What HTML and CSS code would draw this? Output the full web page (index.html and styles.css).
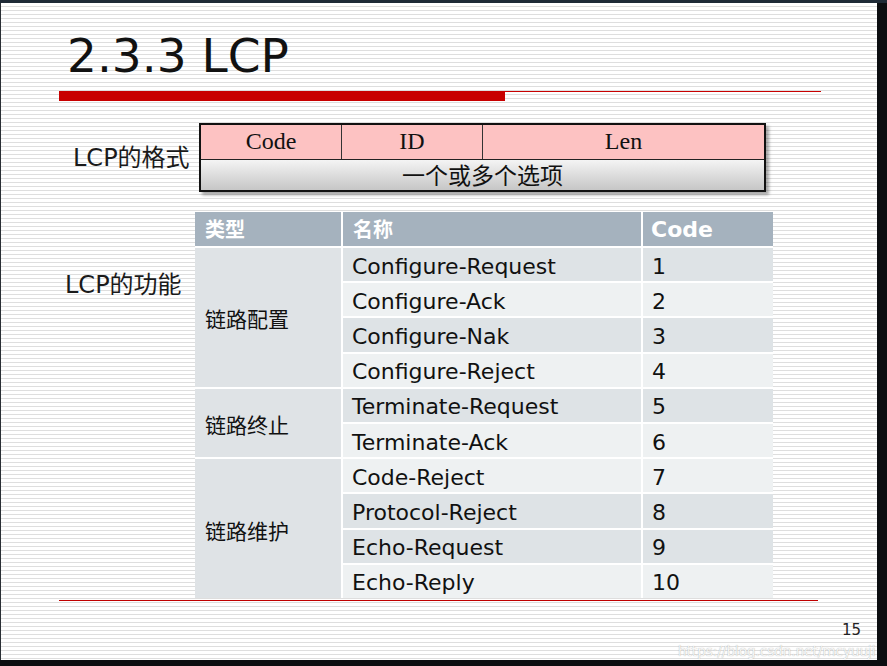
FILE: index.html
```html
<!DOCTYPE html>
<html lang="zh">
<head>
<meta charset="utf-8">
<title>2.3.3 LCP</title>
<link rel="stylesheet" href="styles.css">
</head>
<body>
<div class="topbar"></div>
<div class="frame">
  <div class="edge"></div>
  <div class="slide">
    <h1 class="title">2.3.3 LCP</h1>
    <div class="rule"><div class="rule-bar"></div><div class="rule-line"></div></div>

    <div class="format-row">
      <div class="label">LCP的格式</div>
      <div class="packet">
        <div class="packet-head">
          <div class="pcell pcode">Code</div>
          <div class="pcell pid">ID</div>
          <div class="pcell plen">Len</div>
        </div>
        <div class="packet-body">一个或多个选项</div>
      </div>
    </div>

    <div class="func-row">
      <div class="label func-label">LCP的功能</div>
      <div class="ftable">
        <div class="th">类型</div>
        <div class="th">名称</div>
        <div class="th th-code">Code</div>

        <div class="type t1">链路配置</div>
        <div class="td odd">Configure-Request</div><div class="td odd">1</div>
        <div class="td even">Configure-Ack</div><div class="td even">2</div>
        <div class="td odd">Configure-Nak</div><div class="td odd">3</div>
        <div class="td even">Configure-Reject</div><div class="td even">4</div>

        <div class="type t2">链路终止</div>
        <div class="td odd">Terminate-Request</div><div class="td odd">5</div>
        <div class="td even">Terminate-Ack</div><div class="td even">6</div>

        <div class="type t3">链路维护</div>
        <div class="td even">Code-Reject</div><div class="td even">7</div>
        <div class="td odd">Protocol-Reject</div><div class="td odd">8</div>
        <div class="td odd">Echo-Request</div><div class="td odd">9</div>
        <div class="td even">Echo-Reply</div><div class="td even">10</div>
      </div>
    </div>

    <div class="bottom-line"></div>
    <div class="page-num">15</div>
    <div class="watermark">https://blog.csdn.net/mcyuuji</div>
  </div>
</div>
</body>
</html>
```
FILE: styles.css
```css
html, body {
  margin: 0;
  padding: 0;
}
body {
  width: 887px;
  height: 666px;
  overflow: hidden;
  background: #0c0e11;
  font-family: "DejaVu Sans", "Noto Sans CJK SC", sans-serif;
}
.topbar {
  height: 3px;
  background: #1f2b37;
}
.frame {
  display: flex;
}
.edge {
  width: 1px;
  height: 657px;
  background: #2a2f35;
}
.slide {
  position: relative;
  width: 876px;
  height: 657px;
  overflow: hidden;
  box-sizing: border-box;
  padding-top: 28px;
  background: repeating-linear-gradient(to bottom, #ffffff 0, #ffffff 3px, #dedede 3px, #dedede 4px);
}
.title {
  margin: 0 0 0 66px;
  font-family: "DejaVu Sans", sans-serif;
  font-weight: normal;
  font-size: 47px;
  line-height: 50px;
  height: 50px;
  color: #111;
}
.rule {
  display: flex;
  align-items: flex-start;
  margin: 10px 0 0 58px;
  width: 762px;
  height: 10px;
}
.rule-bar {
  width: 446px;
  height: 10px;
  background: #c80000;
}
.rule-line {
  flex: 1;
  height: 1px;
  background: #c80000;
}
.format-row {
  display: flex;
  align-items: center;
  margin-top: 22px;
  padding-left: 72px;
}
.label {
  font-family: "DejaVu Sans", "Noto Sans CJK SC", sans-serif;
  font-size: 24px;
  line-height: 28px;
  white-space: nowrap;
  color: #1a1a1a;
}
.format-row .label {
  width: 126px;
}
.packet {
  width: 567px;
  height: 69px;
  box-sizing: border-box;
  border: 2px solid #111;
  box-shadow: 3px 3px 3px rgba(0, 0, 0, 0.35);
  display: flex;
  flex-direction: column;
}
.packet-head {
  display: flex;
  height: 34px;
  background: #fdc2c2;
  border-bottom: 1px solid #222;
}
.pcell {
  font-family: "Liberation Serif", serif;
  font-size: 24px;
  line-height: 33px;
  text-align: center;
  color: #111;
}
.pcode, .pid {
  width: 140px;
  border-right: 1px solid #333;
}
.plen {
  flex: 1;
}
.packet-body {
  flex: 1;
  background: linear-gradient(to bottom, #f4f4f4, #c6c6c6);
  font-family: "Noto Sans CJK SC", sans-serif;
  font-size: 23px;
  line-height: 29px;
  text-align: center;
  color: #111;
}
.func-row {
  display: flex;
  align-items: flex-start;
  margin-top: 20px;
  padding-left: 64px;
}
.func-label {
  width: 130px;
  margin-top: 59px;
}
.ftable {
  width: 578px;
  height: 386px;
  display: grid;
  grid-template-columns: 146px 298px 130px;
  grid-template-rows: 34px repeat(10, 1fr);
  gap: 2px;
  background: #ffffff;
}
.th {
  background: #a5b2be;
  color: #ffffff;
  font-weight: bold;
  font-size: 20px;
  line-height: 36px;
  padding-left: 10px;
}
.th-code {
  font-size: 22px;
  padding-left: 8px;
}
.type {
  grid-column: 1;
  background: #dfe3e6;
  display: flex;
  align-items: center;
  padding-left: 10px;
  padding-top: 2px;
  font-size: 21px;
  color: #111;
  font-family: "Noto Sans CJK SC", sans-serif;
}
.t1 { grid-row: 2 / span 4; }
.t2 { grid-row: 6 / span 2; }
.t3 { grid-row: 8 / span 4; }
.td {
  display: flex;
  align-items: center;
  padding-left: 9px;
  padding-top: 3px;
  font-size: 22px;
  color: #111;
}
.odd { background: #dee3e6; }
.even { background: #eef1f2; }
.bottom-line {
  margin: 2px 0 0 58px;
  width: 759px;
  height: 1px;
  background: #c00000;
}
.page-num {
  margin-top: 21px;
  padding-right: 16px;
  text-align: right;
  font-size: 15px;
  line-height: 17px;
  color: #222;
}
.watermark {
  position: absolute;
  left: 677px;
  top: 641px;
  font-size: 13.5px;
  line-height: 15px;
  white-space: nowrap;
  color: #f6f6f6;
  text-shadow: 0 0 1px rgba(0, 0, 0, 0.35);
}
```
